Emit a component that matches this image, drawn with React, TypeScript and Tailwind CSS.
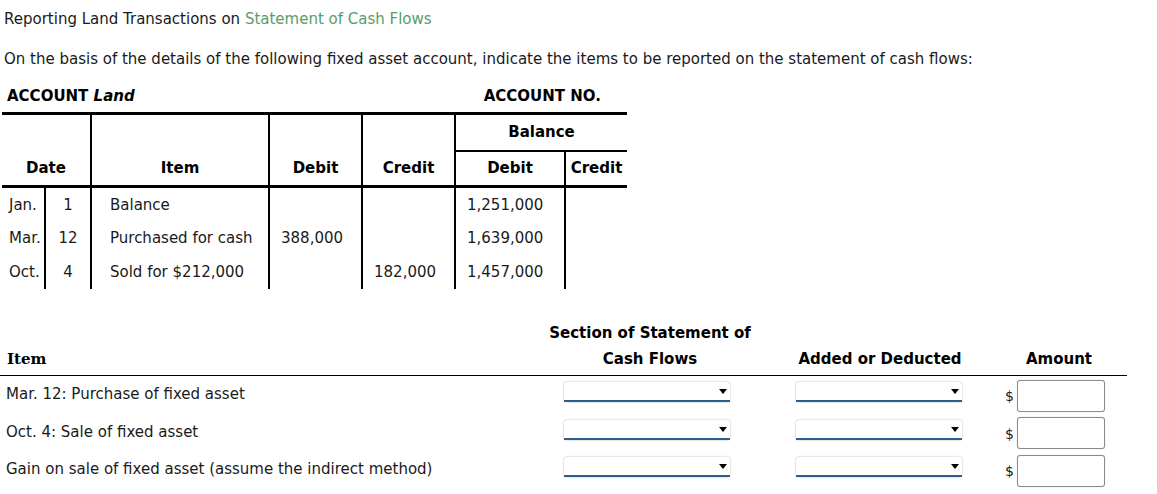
import React from "react";

const ledger = [
  { month: "Jan.", day: "1", item: "Balance", debit: "", credit: "", balDebit: "1,251,000" },
  { month: "Mar.", day: "12", item: "Purchased for cash", debit: "388,000", credit: "", balDebit: "1,639,000" },
  { month: "Oct.", day: "4", item: "Sold for $212,000", debit: "", credit: "182,000", balDebit: "1,457,000" },
];

const items = [
  "Mar. 12: Purchase of fixed asset",
  "Oct. 4: Sale of fixed asset",
  "Gain on sale of fixed asset (assume the indirect method)",
];

function Dropdown() {
  return (
    <div className="relative mb-[4px] h-[20px] w-[166px] rounded-[3px] bg-white shadow-[0_0_2px_rgba(0,0,0,0.35)]">
      <div className="absolute bottom-0 left-0 right-0 h-[2px] bg-[#2d5f8e]" />
      <div className="absolute right-[3px] top-[7px] h-0 w-0 border-x-[4px] border-t-[5px] border-x-transparent border-t-black" />
    </div>
  );
}

export default function App() {
  return (
    <div className="bg-white text-[#1a1a1a] font-['DejaVu_Sans',Verdana,sans-serif] text-[15px]">
      <p className="pl-[4px] pt-[9px] leading-[20px]">
        Reporting Land Transactions on <span className="text-[#5a9c6c]">Statement of Cash Flows</span>
      </p>
      <p className="mt-[20px] pl-[4px] leading-[20px]">
        On the basis of the details of the following fixed asset account, indicate the items to be reported on the
        statement of cash flows:
      </p>

      <div className="mt-[17px] flex w-[627px] pl-[7px] font-bold leading-[20px] text-black">
        <span>
          ACCOUNT <i>Land</i>
        </span>
        <span className="ml-[349px]">ACCOUNT NO.</span>
      </div>

      <table className="ml-[2px] mt-[6px] border-collapse">
        <colgroup>
          <col className="w-[43px]" />
          <col className="w-[46px]" />
          <col className="w-[178px]" />
          <col className="w-[93px]" />
          <col className="w-[93px]" />
          <col className="w-[110px]" />
          <col className="w-[62px]" />
        </colgroup>
        <thead className="font-bold text-black">
          <tr className="h-[37px] border-t-[3px] border-black">
            <th colSpan={2} />
            <th className="border-l-2 border-black" />
            <th className="border-l-2 border-black" />
            <th className="border-l-2 border-black" />
            <th colSpan={2} className="border-b-2 border-l-2 border-black text-center">
              Balance
            </th>
          </tr>
          <tr className="h-[36px] border-b-[3px] border-black">
            <th colSpan={2} className="text-center">Date</th>
            <th className="border-l-2 border-black text-center">Item</th>
            <th className="border-l-2 border-black text-center">Debit</th>
            <th className="border-l-2 border-black text-center">Credit</th>
            <th className="border-l-2 border-black text-center">Debit</th>
            <th className="border-l-2 border-black text-center">Credit</th>
          </tr>
        </thead>
        <tbody>
          {ledger.map((row) => (
            <tr key={row.month} className="h-[34px]">
              <td className="pl-[7px] pt-[2px]">{row.month}</td>
              <td className="border-l-2 border-black pt-[2px] text-center">{row.day}</td>
              <td className="border-l-2 border-black pl-[18px] pt-[2px]">{row.item}</td>
              <td className="border-l-2 border-black pl-[11px] pt-[2px]">{row.debit}</td>
              <td className="border-l-2 border-black pl-[11px] pt-[2px]">{row.credit}</td>
              <td className="border-l-2 border-black pl-[11px] pt-[2px]">{row.balDebit}</td>
              <td className="border-l-2 border-black" />
            </tr>
          ))}
        </tbody>
      </table>

      <div className="mt-[31px] w-[1127px]">
        <div className="grid grid-cols-[545px_210px_250px_122px] items-end border-b border-black pb-[3px] font-bold text-black leading-[26px]">
          <span className="pl-[7px] font-['DejaVu_Serif',Georgia,serif] text-[15px]">Item</span>
          <span className="text-center">
            Section of Statement of
            <br />
            Cash Flows
          </span>
          <span className="text-center">Added or Deducted</span>
          <span className="pr-[14px] text-center">Amount</span>
        </div>
        {items.map((label) => (
          <div key={label} className="grid h-[37.5px] grid-cols-[545px_210px_250px_122px] items-center">
            <span className="pl-[6px]">{label}</span>
            <div className="pl-[19px]">
              <Dropdown />
            </div>
            <div className="pl-[41px]">
              <Dropdown />
            </div>
            <div className="flex items-center">
              <span className="mt-[4px] text-[14px] leading-[18px]">$</span>
              <div className="ml-[3px] mt-[3px] h-[32px] w-[88px] rounded-[3px] border border-[#8a8a8a] bg-white shadow-[0_0_1px_rgba(0,0,0,0.3)]" />
            </div>
          </div>
        ))}
      </div>
    </div>
  );
}
